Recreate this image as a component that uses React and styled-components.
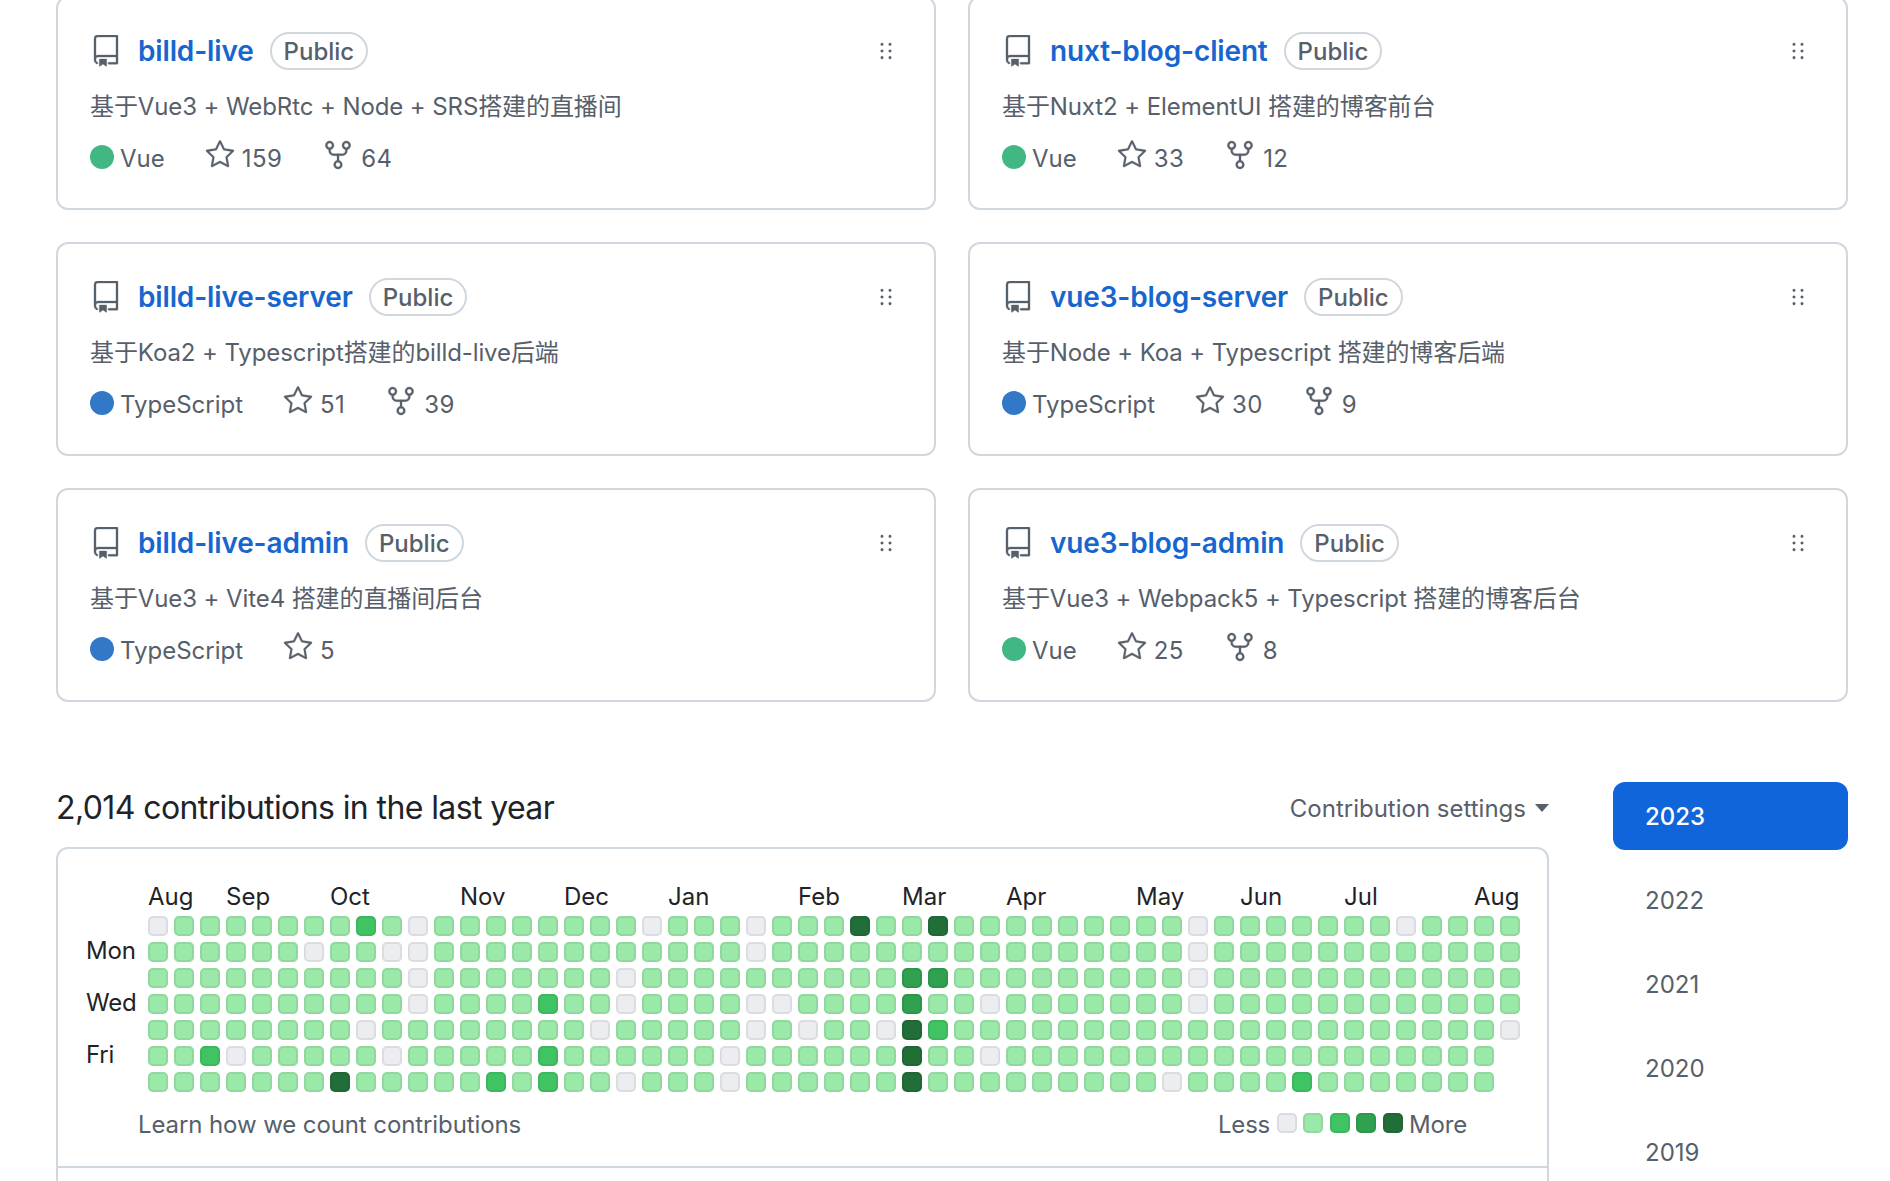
import React from 'react';
import styled, {createGlobalStyle} from 'styled-components';
import {GoRepo, GoStar, GoRepoForked, GoGrabber} from 'react-icons/go';

const GlobalStyle = createGlobalStyle`
  html, body {
    margin: 0;
    height: 100%;
    overflow: hidden;
    background: #fff;
  }
  body {
    font-family: Inter, "Noto Sans CJK SC", "Liberation Sans", sans-serif;
    color: #1f2328;
  }
`;

const Page = styled.div`
  height: 1181px;
  overflow: hidden;
`;

const Container = styled.div`
  margin-top: -4px;
  padding: 0 42px 0 56px;
`;

const PinnedGrid = styled.div`
  display: grid;
  grid-template-columns: 1fr 1fr;
  gap: 32px;
  margin-bottom: 80px;
`;

const Card = styled.div`
  box-sizing: border-box;
  height: 214px;
  padding: 32px;
  background: #fff;
  border: 2px solid #d0d7de;
  border-radius: 12px;
`;

const TitleRow = styled.div`
  display: flex;
  align-items: center;
  height: 42px;
  color: #57606a;

  svg {
    stroke: currentColor;
    stroke-width: 0.25;
  }
`;

const RepoName = styled.a`
  margin-left: 16px;
  font-size: 28px;
  font-weight: 600;
  letter-spacing: -0.15px;
  color: #1766cf;
`;

const Badge = styled.span`
  box-sizing: border-box;
  height: 38px;
  margin-left: 16px;
  padding: 0 12px;
  border: 2px solid #d0d7de;
  border-radius: 19px;
  font-size: 24px;
  font-weight: 500;
  line-height: 36px;
  color: #57606a;
`;

const Grabber = styled.span`
  display: flex;
  margin-left: auto;
  color: #57606a;
`;

const Desc = styled.p`
  margin: 17px 0 0;
  font-size: 24px;
  line-height: 36px;
  letter-spacing: -0.1px;
  color: #57606a;
`;

const Meta = styled.div`
  display: flex;
  align-items: center;
  height: 36px;
  margin-top: 15px;
  font-size: 24px;
  color: #57606a;
`;

const LangDot = styled.span`
  width: 24px;
  height: 24px;
  margin: 0 6px 2px 0;
  border-radius: 50%;
  background: ${p => p.$color};
`;

const Stat = styled.span`
  display: flex;
  align-items: center;
  gap: 7px;
  margin-left: ${p => p.$left}px;
  letter-spacing: 0.4px;

  svg {
    margin-bottom: 6px;
    stroke: currentColor;
    stroke-width: 0.25;
  }
`;

const BottomRow = styled.div`
  display: flex;
  gap: 64px;
`;

const Main = styled.div`
  flex: 1;
  min-width: 0;
`;

const HeadingRow = styled.div`
  display: flex;
  align-items: center;
  justify-content: space-between;
  height: 50px;
  margin-bottom: 15px;
`;

const Heading = styled.h2`
  margin: 0;
  font-size: 32px;
  font-weight: 400;
  letter-spacing: -0.6px;
  color: #1f2328;
`;

const Settings = styled.span`
  display: flex;
  align-items: center;
  gap: 9px;
  padding-top: 2px;
  font-size: 24px;
  color: #57606a;
`;

const Caret = styled.span`
  width: 0;
  height: 0;
  border-top: 8px solid #57606a;
  border-left: 7px solid transparent;
  border-right: 7px solid transparent;
`;

const GraphBox = styled.div`
  box-sizing: border-box;
  height: 400px;
  border: 2px solid #d0d7de;
  border-radius: 12px;
`;

const GraphInner = styled.div`
  padding: 29px 27px 24px 28px;
  border-bottom: 2px solid #d0d7de;
`;

const MonthRow = styled.div`
  display: grid;
  grid-template-columns: repeat(53, 26px);
  height: 36px;
  margin: 0 0 2px 62px;
  font-size: 24px;
  line-height: 38px;
`;

const Month = styled.span`
  grid-row: 1;
  grid-column: ${p => p.$col + 1} / span 4;
  white-space: nowrap;
`;

const GraphBody = styled.div`
  display: flex;
`;

const WeekLabels = styled.div`
  display: grid;
  grid-template-rows: repeat(7, 20px);
  row-gap: 6px;
  width: 62px;
  font-size: 24px;
  line-height: 18px;
  letter-spacing: -0.2px;
`;

const Cells = styled.div`
  display: grid;
  grid-template-rows: repeat(7, 20px);
  grid-auto-flow: column;
  grid-auto-columns: 20px;
  gap: 6px;
`;

const levelColors = ['#ebedf0', '#9be9a8', '#40c463', '#30a14e', '#216e39'];

const Cell = styled.span`
  box-sizing: border-box;
  width: 20px;
  height: 20px;
  border-radius: 5px;
  background: ${p => levelColors[p.$level]};
  border: 2px solid rgba(27, 31, 35, 0.08);
`;

const LegendCell = styled(Cell)`
  margin-bottom: 2px;
`;

const Footer = styled.div`
  display: flex;
  align-items: center;
  justify-content: space-between;
  height: 36px;
  margin: 14px 53px 0 52px;
  font-size: 24px;
  letter-spacing: -0.1px;
  color: #57606a;
`;

const Legend = styled.div`
  display: flex;
  align-items: center;
  gap: 6.5px;
  letter-spacing: -0.2px;
`;

const Years = styled.div`
  display: flex;
  flex-direction: column;
  gap: 16px;
  width: 235px;
`;

const Year = styled.a`
  box-sizing: border-box;
  height: 68px;
  padding-left: 32px;
  border-radius: 12px;
  font-size: 24px;
  font-weight: ${p => (p.$active ? 500 : 400)};
  line-height: 70px;
  color: ${p => (p.$active ? '#fff' : '#57606a')};
  background: ${p => (p.$active ? '#0f65d9' : 'transparent')};
`;

const VUE = '#41b883';
const TS = '#3178c6';

const repos = [
  {name: 'billd-live', desc: '基于Vue3 + WebRtc + Node + SRS搭建的直播间', lang: 'Vue', color: VUE, stars: 159, forks: 64},
  {name: 'nuxt-blog-client', desc: '基于Nuxt2 + ElementUI 搭建的博客前台', lang: 'Vue', color: VUE, stars: 33, forks: 12},
  {name: 'billd-live-server', desc: '基于Koa2 + Typescript搭建的billd-live后端', lang: 'TypeScript', color: TS, stars: 51, forks: 39},
  {name: 'vue3-blog-server', desc: '基于Node + Koa + Typescript 搭建的博客后端', lang: 'TypeScript', color: TS, stars: 30, forks: 9},
  {name: 'billd-live-admin', desc: '基于Vue3 + Vite4 搭建的直播间后台', lang: 'TypeScript', color: TS, stars: 5},
  {name: 'vue3-blog-admin', desc: '基于Vue3 + Webpack5 + Typescript 搭建的博客后台', lang: 'Vue', color: VUE, stars: 25, forks: 8},
];

const months = [
  ['Aug', 0], ['Sep', 3], ['Oct', 7], ['Nov', 12], ['Dec', 16], ['Jan', 20], ['Feb', 25],
  ['Mar', 29], ['Apr', 33], ['May', 38], ['Jun', 42], ['Jul', 46], ['Aug', 51],
];

const weekdays = ['', 'Mon', '', 'Wed', '', 'Fri', ''];

// everything is level 1 apart from these: [day, week, level]
const special = [
  [0, 0, 0], [0, 8, 2], [0, 10, 0], [0, 19, 0], [0, 23, 0], [0, 27, 4], [0, 30, 4], [0, 40, 0], [0, 48, 0],
  [1, 6, 0], [1, 9, 0], [1, 10, 0], [1, 23, 0], [1, 40, 0],
  [2, 10, 0], [2, 18, 0], [2, 29, 3], [2, 30, 3], [2, 40, 0],
  [3, 10, 0], [3, 15, 2], [3, 18, 0], [3, 23, 0], [3, 24, 0], [3, 29, 3], [3, 32, 0], [3, 40, 0],
  [4, 8, 0], [4, 17, 0], [4, 23, 0], [4, 25, 0], [4, 28, 0], [4, 29, 4], [4, 30, 2], [4, 52, 0],
  [5, 2, 2], [5, 3, 0], [5, 9, 0], [5, 15, 2], [5, 22, 0], [5, 29, 4], [5, 32, 0],
  [6, 7, 4], [6, 13, 2], [6, 15, 2], [6, 18, 0], [6, 22, 0], [6, 29, 4], [6, 39, 0], [6, 44, 2],
];

const levelAt = (day, week) => {
  const hit = special.find(s => s[0] === day && s[1] === week);
  return hit ? hit[2] : 1;
};

const cells = [];
for (let week = 0; week < 53; week++) {
  const days = week === 52 ? 5 : 7;
  for (let day = 0; day < days; day++) {
    cells.push({key: week + '-' + day, level: levelAt(day, week)});
  }
}

const RepoCard = ({repo}) => (
  <Card>
    <TitleRow>
      <GoRepo size={32} />
      <RepoName>{repo.name}</RepoName>
      <Badge>Public</Badge>
      <Grabber>
        <GoGrabber size={32} />
      </Grabber>
    </TitleRow>
    <Desc>{repo.desc}</Desc>
    <Meta>
      <LangDot $color={repo.color} />
      {repo.lang}
      <Stat $left={40}>
        <GoStar size={30} />
        {repo.stars}
      </Stat>
      {repo.forks && (
        <Stat $left={40}>
          <GoRepoForked size={32} />
          {repo.forks}
        </Stat>
      )}
    </Meta>
  </Card>
);

export default function App() {
  return (
    <Page>
      <GlobalStyle />
      <Container>
        <PinnedGrid>
          {repos.map(repo => (
            <RepoCard key={repo.name} repo={repo} />
          ))}
        </PinnedGrid>
        <BottomRow>
          <Main>
            <HeadingRow>
              <Heading>2,014 contributions in the last year</Heading>
              <Settings>
                Contribution settings
                <Caret />
              </Settings>
            </HeadingRow>
            <GraphBox>
              <GraphInner>
                <MonthRow>
                  {months.map(([name, col]) => (
                    <Month key={name + col} $col={col}>
                      {name}
                    </Month>
                  ))}
                </MonthRow>
                <GraphBody>
                  <WeekLabels>
                    {weekdays.map((d, i) => (
                      <span key={i}>{d}</span>
                    ))}
                  </WeekLabels>
                  <Cells>
                    {cells.map(c => (
                      <Cell key={c.key} $level={c.level} />
                    ))}
                  </Cells>
                </GraphBody>
                <Footer>
                  <span>Learn how we count contributions</span>
                  <Legend>
                    Less
                    {[0, 1, 2, 3, 4].map(l => (
                      <LegendCell key={l} $level={l} />
                    ))}
                    More
                  </Legend>
                </Footer>
              </GraphInner>
            </GraphBox>
          </Main>
          <Years>
            {[2023, 2022, 2021, 2020, 2019].map((y, i) => (
              <Year key={y} $active={i === 0}>
                {y}
              </Year>
            ))}
          </Years>
        </BottomRow>
      </Container>
    </Page>
  );
}
